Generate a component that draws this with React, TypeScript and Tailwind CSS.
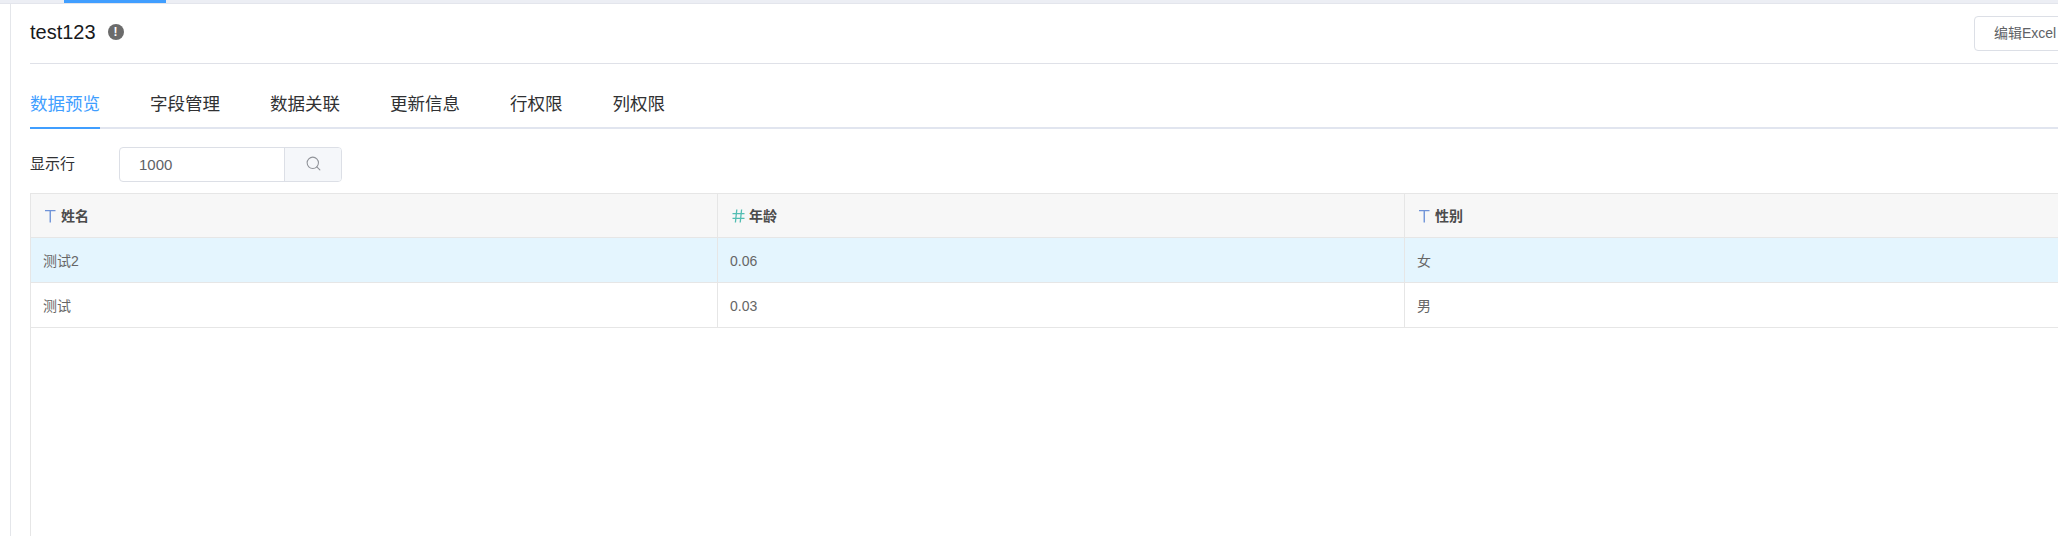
import { Search } from 'lucide-react';

const fontStack = "font-['Liberation_Sans','Noto_Sans_CJK_SC',sans-serif]";

const tabs = ['数据预览', '字段管理', '数据关联', '更新信息', '行权限', '列权限'];

const columns = [
  { name: '姓名', kind: 'text' },
  { name: '年龄', kind: 'number' },
  { name: '性别', kind: 'text' },
];

const rows = [
  { cells: ['测试2', '0.06', '女'], active: true },
  { cells: ['测试', '0.03', '男'], active: false },
];

function TypeIcon({ kind }: { kind: string }) {
  if (kind === 'number') {
    return (
      <svg className="w-[13px] h-[14px] mr-[2px] text-[#52bdb2]" viewBox="0 0 13 14" fill="none" stroke="currentColor" strokeWidth="1.3">
        <path d="M0.5 4.6h12M0.5 9.4h12M4.8 0.5L3.4 13.5M9.6 0.5L8.2 13.5" />
      </svg>
    );
  }
  return (
    <svg className="w-[13px] h-[14px] mr-[1px] text-[#6f93d8]" viewBox="0 0 13 14" fill="none" stroke="currentColor" strokeWidth="1.4">
      <path d="M0 1.6h10.5M5.25 1.6V13.5" />
    </svg>
  );
}

export default function App() {
  return (
    <div className={`${fontStack} w-[2058px] h-[536px] overflow-hidden bg-white flex flex-col`}>
      {/* Top strip */}
      <div className="h-[4px] shrink-0 bg-[#eceef4] border-b border-[#e3e5ec]">
        <div className="ml-[64px] w-[102px] h-[3px] bg-[#409eff]" />
      </div>

      <div className="flex-1 min-h-0 flex">
        <div className="w-[10px] shrink-0" />
        <div className="w-[1px] shrink-0 bg-[#e4e6ea]" />
        <div className="flex-1 min-w-0 pl-[19px]">
          {/* Header */}
          <div className="h-[60px] border-b border-[#dfe1e8] flex items-center justify-between pb-[3px]">
            <div className="flex items-center">
              <span className="text-[20px] text-[#17191c]">test123</span>
              <span className="ml-[12px] w-[16px] h-[16px] rounded-full bg-[#6b6b6b] text-white text-[12px] font-bold leading-none flex items-center justify-center">!</span>
            </div>
            <button className="w-[130px] h-[35px] mt-[3px] -mr-[46px] shrink-0 border border-[#dcdfe6] rounded-[4px] bg-white text-left pl-[19px] text-[14px] text-[#606266]">
              编辑Excel
            </button>
          </div>

          {/* Tabs */}
          <div className="mt-[17px] h-[48px] flex border-b-2 border-[#e1e5ef]">
            {tabs.map((tab, i) => (
              <div
                key={tab}
                className={`h-[48px] mr-[50px] pt-[11px] text-[17.5px] leading-[24px] ${
                  i === 0 ? 'text-[#409eff] border-b-2 border-[#409eff]' : 'text-[#303133]'
                }`}
              >
                {tab}
              </div>
            ))}
          </div>

          {/* Row count filter */}
          <div className="mt-[18px] flex items-center">
            <span className="w-[89px] text-[15px] text-[#303133]">显示行</span>
            <div className="w-[223px] h-[35px] flex border border-[#dcdfe6] rounded-[4px] overflow-hidden">
              <div className="flex-1 pl-[19px] text-[15px] leading-[33px] text-[#606266]">1000</div>
              <div className="w-[57px] border-l border-[#dcdfe6] bg-[#f5f7fa] flex items-center justify-center pb-[3px]">
                <Search className="w-[17px] h-[17px] text-[#909399]" strokeWidth={1.5} />
              </div>
            </div>
          </div>

          {/* Table */}
          <div className="mt-[11px] border-l border-[#e6e6e6] h-[400px]">
            <div className="grid grid-cols-[687px_687px_1fr] h-[45px] bg-[#f7f7f7] border-y border-[#e6e6e6]">
              {columns.map((col, i) => (
                <div
                  key={col.name}
                  className={`flex items-center pl-[14px] pt-[1px] text-[14px] font-bold text-[#4c4c4c] ${i < 2 ? 'border-r border-[#e6e6e6]' : ''}`}
                >
                  <TypeIcon kind={col.kind} />
                  <span className="ml-[2px]">{col.name}</span>
                </div>
              ))}
            </div>
            {rows.map(row => (
              <div
                key={row.cells[0]}
                className={`grid grid-cols-[687px_687px_1fr] h-[45px] border-b border-[#e6e6e6] ${row.active ? 'bg-[#e4f5fe]' : 'bg-white'}`}
              >
                {row.cells.map((cell, i) => (
                  <div
                    key={cell}
                    className={`flex items-center pl-[12px] pt-[2px] text-[14px] text-[#666666] ${i < 2 ? 'border-r border-[#e6e6e6]' : ''}`}
                  >
                    {cell}
                  </div>
                ))}
              </div>
            ))}
          </div>
        </div>
      </div>
    </div>
  );
}
